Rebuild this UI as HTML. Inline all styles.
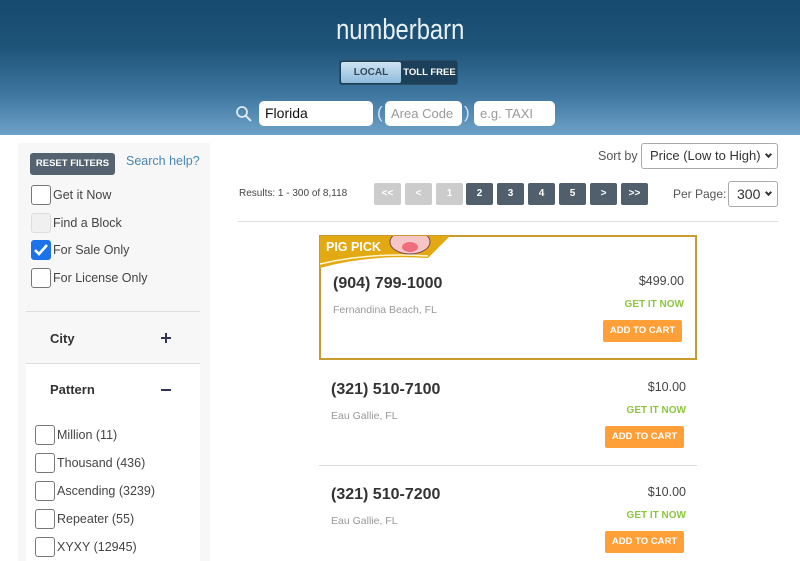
<!DOCTYPE html>
<html><head><style>
*{box-sizing:border-box;margin:0;padding:0}
body{width:800px;height:561px;overflow:hidden;font-family:"Liberation Sans",sans-serif;background:#fff;position:relative;color:#333}
.abs{position:absolute;white-space:nowrap}
.hdr{left:0;top:0;width:800px;height:135px;background:linear-gradient(#164a6e 0%,#1f5479 35%,#3e76a0 70%,#6ea2c8 100%)}
.logo{left:0;width:800px;top:14px;text-align:center;color:#e8f0f6;font-size:29px;font-weight:300}
.logo span{display:inline-block;transform:scaleX(0.82)}
.tog{left:339px;top:60px;width:119px;height:25px;background:#1c3f5a;border-radius:3px;border:1px solid #2b4d66}
.tog .l{position:absolute;left:1px;top:1px;width:60px;height:21px;background:linear-gradient(#cfe3f1,#8fbbdd);border-radius:2px;font-size:10px;font-weight:bold;color:#2f4a5e;text-align:center;line-height:21px}
.tog .t{position:absolute;left:62px;top:1px;width:55px;height:21px;font-size:9.5px;font-weight:bold;color:#fff;text-align:center;line-height:21px;white-space:nowrap}
.inp{background:#fff;border-radius:5px;height:25px;font-size:14px;line-height:25px;padding-left:6px;top:101px;overflow:hidden}
.side{left:18px;top:143px;width:192px;height:418px;background:#f7f7f7}
.white{left:26px;top:363px;width:174px;height:198px;background:#fff}
.cb{width:20px;height:20px;border:1px solid #777;border-radius:3px;background:#fff}
.lbl{font-size:12.5px;color:#444}
.pg{top:183px;width:27px;height:22px;border-radius:2px;color:#fff;font-size:10px;font-weight:bold;text-align:center;line-height:22px}
.sel{background:#fff;border:1px solid #aaa;border-radius:3px;font-size:14px;padding-left:8px;line-height:24px;height:26px}
.sel i{position:absolute;right:6px;top:8px;width:5px;height:5px;border-right:2px solid #333;border-bottom:2px solid #333;transform:rotate(45deg)}
.ph{font-size:16px;font-weight:bold;color:#333}
.loc{font-size:10.5px;color:#999}
.pr{font-size:12.5px;color:#444}
.gin{font-size:10px;font-weight:bold;color:#8dc63f}
.atc{width:79px;height:22px;background:#ff9f37;border-radius:2px;color:#fff;font-size:9.5px;font-weight:bold;text-align:center;line-height:22px}
</style></head><body>
<div class="abs hdr"></div>
<div class="abs logo"><span>numberbarn</span></div>
<div class="abs tog"><div class="l">LOCAL</div><div class="t">TOLL FREE</div></div>
<svg class="abs" style="left:235px;top:105px" width="18" height="18"><circle cx="7" cy="7" r="5" fill="none" stroke="#dce9f3" stroke-width="1.8"/><line x1="11" y1="11" x2="16" y2="16" stroke="#dce9f3" stroke-width="2"/></svg>
<div class="abs inp" style="left:259px;width:114px;color:#111">Florida</div>
<div class="abs" style="left:377px;top:103px;color:#cfe0ee;font-size:17px">(</div>
<div class="abs inp" style="left:385px;width:77px;color:#999;font-size:13px">Area Code</div>
<div class="abs" style="left:464px;top:103px;color:#cfe0ee;font-size:17px">)</div>
<div class="abs inp" style="left:474px;width:81px;color:#999;font-size:13px">e.g. TAXI</div>

<div class="abs side"></div>
<div class="abs white"></div>
<div class="abs" style="left:30px;top:153px;width:85px;height:22px;background:#556270;border-radius:3px;color:#fff;font-size:9.5px;font-weight:bold;text-align:center;line-height:22px">RESET FILTERS</div>
<div class="abs" style="left:126px;top:154px;font-size:12.5px;color:#4a86b3">Search help?</div>
<div class="abs cb" style="left:31px;top:185px"></div><div class="abs lbl" style="left:53px;top:188px">Get it Now</div>
<div class="abs cb" style="left:31px;top:213px;border-color:#ddd;background:#f0f0f0"></div><div class="abs lbl" style="left:53px;top:216px">Find a Block</div>
<div class="abs cb" style="left:31px;top:240px;background:#1a73e8;border-color:#1a73e8"><svg width="18" height="18"><path d="M3 9 L7 13 L15 4" fill="none" stroke="#fff" stroke-width="2.6"/></svg></div><div class="abs lbl" style="left:53px;top:243px">For Sale Only</div>
<div class="abs cb" style="left:31px;top:268px"></div><div class="abs lbl" style="left:53px;top:271px">For License Only</div>
<div class="abs" style="left:26px;top:311px;width:174px;height:1px;background:#ddd"></div>
<div class="abs" style="left:50px;top:331px;font-size:13px;font-weight:bold">City</div>
<div class="abs" style="left:161px;top:337px;width:10px;height:2px;background:#335"></div>
<div class="abs" style="left:165px;top:333px;width:2px;height:10px;background:#335"></div>
<div class="abs" style="left:26px;top:363px;width:174px;height:1px;background:#ddd"></div>
<div class="abs" style="left:50px;top:382px;font-size:13px;font-weight:bold">Pattern</div>
<div class="abs" style="left:161px;top:389px;width:10px;height:2px;background:#335"></div>
<div class="abs cb" style="left:35px;top:425px"></div><div class="abs lbl" style="left:57px;top:428px">Million (11)</div>
<div class="abs cb" style="left:35px;top:453px"></div><div class="abs lbl" style="left:57px;top:456px">Thousand (436)</div>
<div class="abs cb" style="left:35px;top:481px"></div><div class="abs lbl" style="left:57px;top:484px">Ascending (3239)</div>
<div class="abs cb" style="left:35px;top:509px"></div><div class="abs lbl" style="left:57px;top:512px">Repeater (55)</div>
<div class="abs cb" style="left:35px;top:537px"></div><div class="abs lbl" style="left:57px;top:540px">XYXY (12945)</div>

<div class="abs" style="left:598px;top:149px;font-size:12.5px;color:#555">Sort by</div>
<div class="abs sel" style="left:641px;top:143px;width:137px;font-size:13px">Price (Low to High)<i></i></div>
<div class="abs" style="left:239px;top:188px;font-size:10px;color:#444">Results: 1 - 300 of 8,118</div>
<div class="abs pg" style="left:374px;background:#ccc">&lt;&lt;</div>
<div class="abs pg" style="left:405px;background:#ccc">&lt;</div>
<div class="abs pg" style="left:436px;background:#ccc">1</div>
<div class="abs pg" style="left:466px;background:#505f6b">2</div>
<div class="abs pg" style="left:497px;background:#505f6b">3</div>
<div class="abs pg" style="left:528px;background:#505f6b">4</div>
<div class="abs pg" style="left:559px;background:#505f6b">5</div>
<div class="abs pg" style="left:590px;background:#505f6b">&gt;</div>
<div class="abs pg" style="left:621px;background:#505f6b">&gt;&gt;</div>
<div class="abs" style="left:673px;top:187px;font-size:12px;color:#555">Per Page:</div>
<div class="abs sel" style="left:728px;top:181px;width:50px">300<i></i></div>
<div class="abs" style="left:238px;top:221px;width:540px;height:1px;background:#ddd"></div>

<div class="abs" style="left:319px;top:235px;width:378px;height:125px;border:2px solid #c99a2e"></div>
<svg class="abs" style="left:320px;top:236px" width="135" height="34"><path d="M0 0 H130 L108 22 Q50 18 0 32 Z" fill="#e3a913"/><path d="M0 28 Q50 16 108 20" stroke="#fff7d0" stroke-width="1.5" fill="none"/><ellipse cx="90" cy="6" rx="20" ry="12" fill="#f6c6c6" stroke="#7a4a4a"/><ellipse cx="90" cy="11" rx="8" ry="5" fill="#ee6e7e"/><text x="6" y="15" fill="#fff" font-size="12.5" font-weight="bold" font-family="Liberation Sans">PIG PICK</text></svg>
<div class="abs ph" style="left:333px;top:275px">(904) 799-1000</div>
<div class="abs loc" style="left:333px;top:304px">Fernandina Beach, FL</div>
<div class="abs pr" style="right:116px;top:274px">$499.00</div>
<div class="abs gin" style="right:116px;top:299px">GET IT NOW</div>
<div class="abs atc" style="left:603px;top:320px">ADD TO CART</div>

<div class="abs ph" style="left:331px;top:381px">(321) 510-7100</div>
<div class="abs loc" style="left:331px;top:410px">Eau Gallie, FL</div>
<div class="abs pr" style="right:114px;top:380px">$10.00</div>
<div class="abs gin" style="right:114px;top:405px">GET IT NOW</div>
<div class="abs atc" style="left:605px;top:426px">ADD TO CART</div>
<div class="abs" style="left:319px;top:465px;width:378px;height:1px;background:#ddd"></div>

<div class="abs ph" style="left:331px;top:486px">(321) 510-7200</div>
<div class="abs loc" style="left:331px;top:515px">Eau Gallie, FL</div>
<div class="abs pr" style="right:114px;top:485px">$10.00</div>
<div class="abs gin" style="right:114px;top:510px">GET IT NOW</div>
<div class="abs atc" style="left:605px;top:531px">ADD TO CART</div>
</body></html>
